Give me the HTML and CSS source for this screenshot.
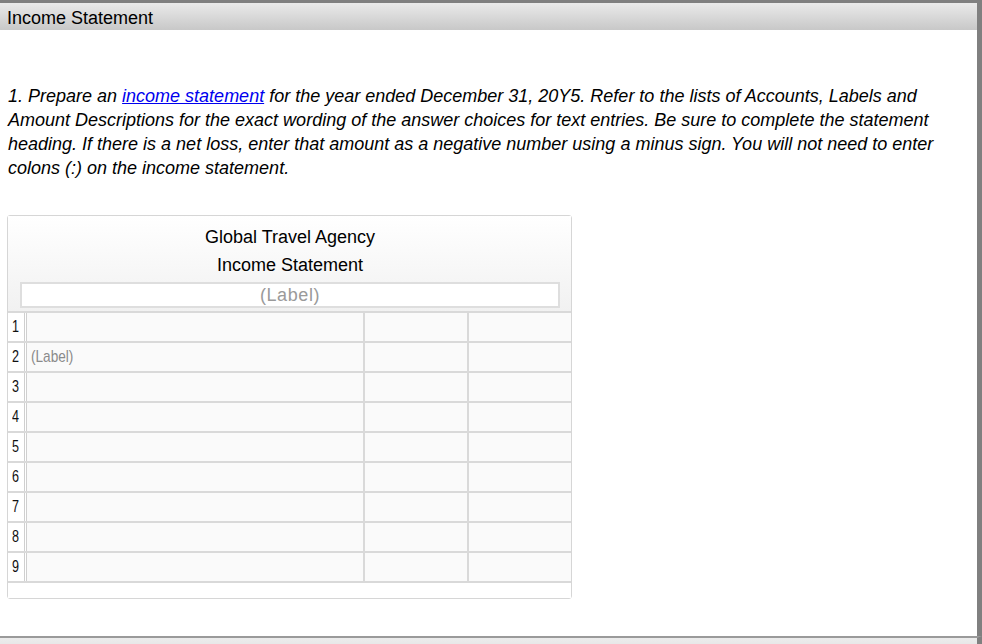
FILE: index.html
```html
<!DOCTYPE html>
<html>
<head>
<meta charset="utf-8">
<link rel="stylesheet" href="styles.css">
</head>
<body>
<div class="frame">
  <section class="panel">
    <div class="panel-head">Income Statement</div>
    <div class="panel-body">
      <p class="question">1. Prepare an <a href="#">income statement</a> for the year ended December 31, 20Y5. Refer to the lists of Accounts, Labels and Amount Descriptions for the exact wording of the answer choices for text entries. Be sure to complete the statement heading. If there is a net loss, enter that amount as a negative number using a minus sign. You will not need to enter colons (:) on the income statement.</p>
      <div class="statement">
        <div class="st-head">
          <div class="st-line">Global Travel Agency</div>
          <div class="st-line">Income Statement</div>
          <div class="label-box">(Label)</div>
        </div>
        <div class="row"><div class="num"><span class="narrow">1</span></div><div class="cell lbl"></div><div class="cell"></div><div class="cell"></div></div>
        <div class="row"><div class="num"><span class="narrow">2</span></div><div class="cell lbl"><span class="narrow">(Label)</span></div><div class="cell"></div><div class="cell"></div></div>
        <div class="row"><div class="num"><span class="narrow">3</span></div><div class="cell lbl"></div><div class="cell"></div><div class="cell"></div></div>
        <div class="row"><div class="num"><span class="narrow">4</span></div><div class="cell lbl"></div><div class="cell"></div><div class="cell"></div></div>
        <div class="row"><div class="num"><span class="narrow">5</span></div><div class="cell lbl"></div><div class="cell"></div><div class="cell"></div></div>
        <div class="row"><div class="num"><span class="narrow">6</span></div><div class="cell lbl"></div><div class="cell"></div><div class="cell"></div></div>
        <div class="row"><div class="num"><span class="narrow">7</span></div><div class="cell lbl"></div><div class="cell"></div><div class="cell"></div></div>
        <div class="row"><div class="num"><span class="narrow">8</span></div><div class="cell lbl"></div><div class="cell"></div><div class="cell"></div></div>
        <div class="row"><div class="num"><span class="narrow">9</span></div><div class="cell lbl"></div><div class="cell"></div><div class="cell"></div></div>
        <div class="st-foot"></div>
      </div>
    </div>
  </section>
  <section class="panel next">
    <div class="panel-head next-head"></div>
  </section>
</div>
</body>
</html>
```

FILE: styles.css
```css
html, body {
  margin: 0;
  padding: 0;
  background: #fff;
}
body {
  font-family: "Liberation Sans", Arial, sans-serif;
  color: #000;
  overflow: hidden;
}
.frame {
  width: 982px;
  height: 644px;
  overflow: hidden;
}
.panel {
  border-top: 3px solid #808080;
  border-right: 5px solid #808080;
}
.panel-head {
  height: 27px;
  line-height: 30px;
  padding-left: 7px;
  font-size: 18px;
  background: linear-gradient(#eaeaea, #c8c8c8);
}
.panel-body {
  height: 606px;
  padding: 54px 8px 0 8px;
  box-sizing: border-box;
}
.question {
  margin: 0;
  font-style: italic;
  font-size: 18px;
  line-height: 24px;
}
.question a {
  color: #0000ee;
  text-decoration: underline;
}
.statement {
  margin: 35px 0 0 -1px;
  width: 565px;
  border: 1px solid #d6d6d6;
  border-radius: 3px;
  box-sizing: border-box;
  background: #fff;
}
.st-head {
  padding: 7px 11px 3px 12px;
  background: linear-gradient(#ffffff, #f1f1f1);
  border-bottom: 2px solid #d9d9d9;
  text-align: center;
}
.st-line {
  height: 28px;
  line-height: 28px;
  font-size: 18px;
}
.label-box {
  margin-top: 3px;
  height: 26px;
  line-height: 23px;
  box-sizing: border-box;
  border: 2px solid #dedede;
  background: #fff;
  color: #9a9a9a;
  font-size: 18px;
  letter-spacing: 0.6px;
}
.row {
  display: grid;
  grid-template-columns: 19px 336px 2px 102px 2px 102px;
  height: 30px;
  border-bottom: 2px solid #d9d9d9;
  box-sizing: border-box;
  background: #fafafa;
}
.row .cell:nth-child(3) { grid-column: 4; }
.row .cell:nth-child(4) { grid-column: 6; }
.row::before {
  content: "";
  grid-column: 3;
  grid-row: 1;
  background: #d9d9d9;
}
.row::after {
  content: "";
  grid-column: 5;
  grid-row: 1;
  background: #d9d9d9;
}
.num {
  grid-column: 1;
  grid-row: 1;
  border-right: 3px double #cfcfcf;
  background: #fff;
  font-family: "Liberation Sans", sans-serif;
  font-size: 17px;
  line-height: 28px;
  padding-left: 4px;
  color: #111;
}
.narrow {
  display: inline-block;
  transform: scaleX(0.74);
  transform-origin: left center;
}
.lbl .narrow {
  transform: scaleX(0.8);
}
.cell {
  grid-row: 1;
}
.lbl {
  grid-column: 2;
  font-family: "Liberation Sans", sans-serif;
  font-size: 17px;
  line-height: 28px;
  color: #8a8a8a;
  padding-left: 4px;
}
.st-foot {
  height: 15px;
  background: #fff;
}
.panel.next {
  border-top: 2px solid #9a9a9a;
}
.next-head {
  height: 30px;
  background: linear-gradient(#ececec, #d8d8d8);
}
```
